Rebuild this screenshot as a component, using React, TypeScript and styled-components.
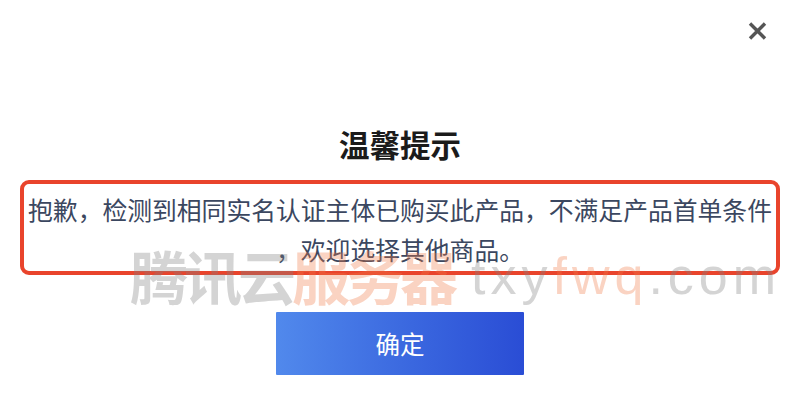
import React from 'react';
import styled, { createGlobalStyle } from 'styled-components';

const GlobalStyle = createGlobalStyle`
  html, body {
    margin: 0;
    padding: 0;
    background: #ffffff;
  }
  body {
    font-family: "Noto Sans CJK SC", "Noto Sans", sans-serif;
  }
`;

const markColor = (tone: 'gray' | 'orange') =>
  tone === 'gray' ? 'rgba(130, 130, 130, 0.34)' : 'rgba(240, 120, 70, 0.33)';

const Page = styled.div`
  position: relative;
  width: 800px;
  height: 409px;
  overflow: hidden;
  background: #ffffff;
`;

const Header = styled.div`
  display: flex;
  justify-content: flex-end;
  padding: 22px 33px 0 0;
`;

const CloseButton = styled.button`
  display: flex;
  align-items: center;
  justify-content: center;
  width: 19px;
  height: 18px;
  padding: 0;
  border: none;
  background: transparent;
  cursor: pointer;
`;

const Body = styled.div`
  display: flex;
  flex-direction: column;
  align-items: center;
`;

const Title = styled.h2`
  margin: 84px 0 0;
  font-size: 30.5px;
  line-height: 40px;
  font-weight: 700;
  color: #1b1b1b;
`;

const Notice = styled.div`
  box-sizing: border-box;
  width: 760px;
  margin-top: 16px;
  padding: 5px 0 2px;
  border: 4px solid #e9442c;
  border-radius: 9px;
`;

const NoticeLine = styled.div`
  font-size: 24.8px;
  line-height: 40px;
  color: #3b4760;
  text-align: center;
  white-space: nowrap;
`;

const ConfirmButton = styled.button`
  width: 248px;
  height: 63px;
  margin-top: 37px;
  border: none;
  border-radius: 1px;
  background: linear-gradient(90deg, #5189ec 0%, #3a67df 55%, #2a4dd5 100%);
  color: #ffffff;
  font-family: "Noto Sans CJK SC", sans-serif;
  font-size: 24.5px;
  cursor: pointer;
`;

const Watermark = styled.div`
  position: absolute;
  left: 130px;
  top: 246px;
  display: flex;
  align-items: baseline;
  line-height: 1;
  pointer-events: none;
  white-space: nowrap;
`;

const MarkCjk = styled.span<{ $tone: 'gray' | 'orange' }>`
  font-family: "Noto Sans CJK SC", sans-serif;
  font-size: 58px;
  font-weight: 700;
  letter-spacing: -4px;
  color: ${p => markColor(p.$tone)};
`;

const MarkLatin = styled.span`
  position: relative;
  top: -6px;
  margin-left: 17px;
  font-family: "Liberation Sans", Arial, sans-serif;
  font-size: 52px;
  letter-spacing: 5px;
`;

const MarkPart = styled.span<{ $tone: 'gray' | 'orange' }>`
  color: ${p => markColor(p.$tone)};
`;

const CloseIcon = () => (
  <svg width="19" height="18" viewBox="0 0 19 18">
    <path d="M2 1.5 L17 16.5 M17 1.5 L2 16.5" stroke="#555555" strokeWidth="3.4" strokeLinecap="butt" />
  </svg>
);

export default function App() {
  return (
    <Page>
      <GlobalStyle />
      <Header>
        <CloseButton aria-label="关闭">
          <CloseIcon />
        </CloseButton>
      </Header>
      <Body>
        <Title>温馨提示</Title>
        <Notice>
          <NoticeLine>抱歉，检测到相同实名认证主体已购买此产品，不满足产品首单条件</NoticeLine>
          <NoticeLine>，欢迎选择其他商品。</NoticeLine>
        </Notice>
        <ConfirmButton>确定</ConfirmButton>
      </Body>
      <Watermark>
        <MarkCjk $tone="gray">腾讯云</MarkCjk>
        <MarkCjk $tone="orange">服务器</MarkCjk>
        <MarkLatin>
          <MarkPart $tone="gray">txy</MarkPart>
          <MarkPart $tone="orange">fwq</MarkPart>
          <MarkPart $tone="gray">.com</MarkPart>
        </MarkLatin>
      </Watermark>
    </Page>
  );
}
